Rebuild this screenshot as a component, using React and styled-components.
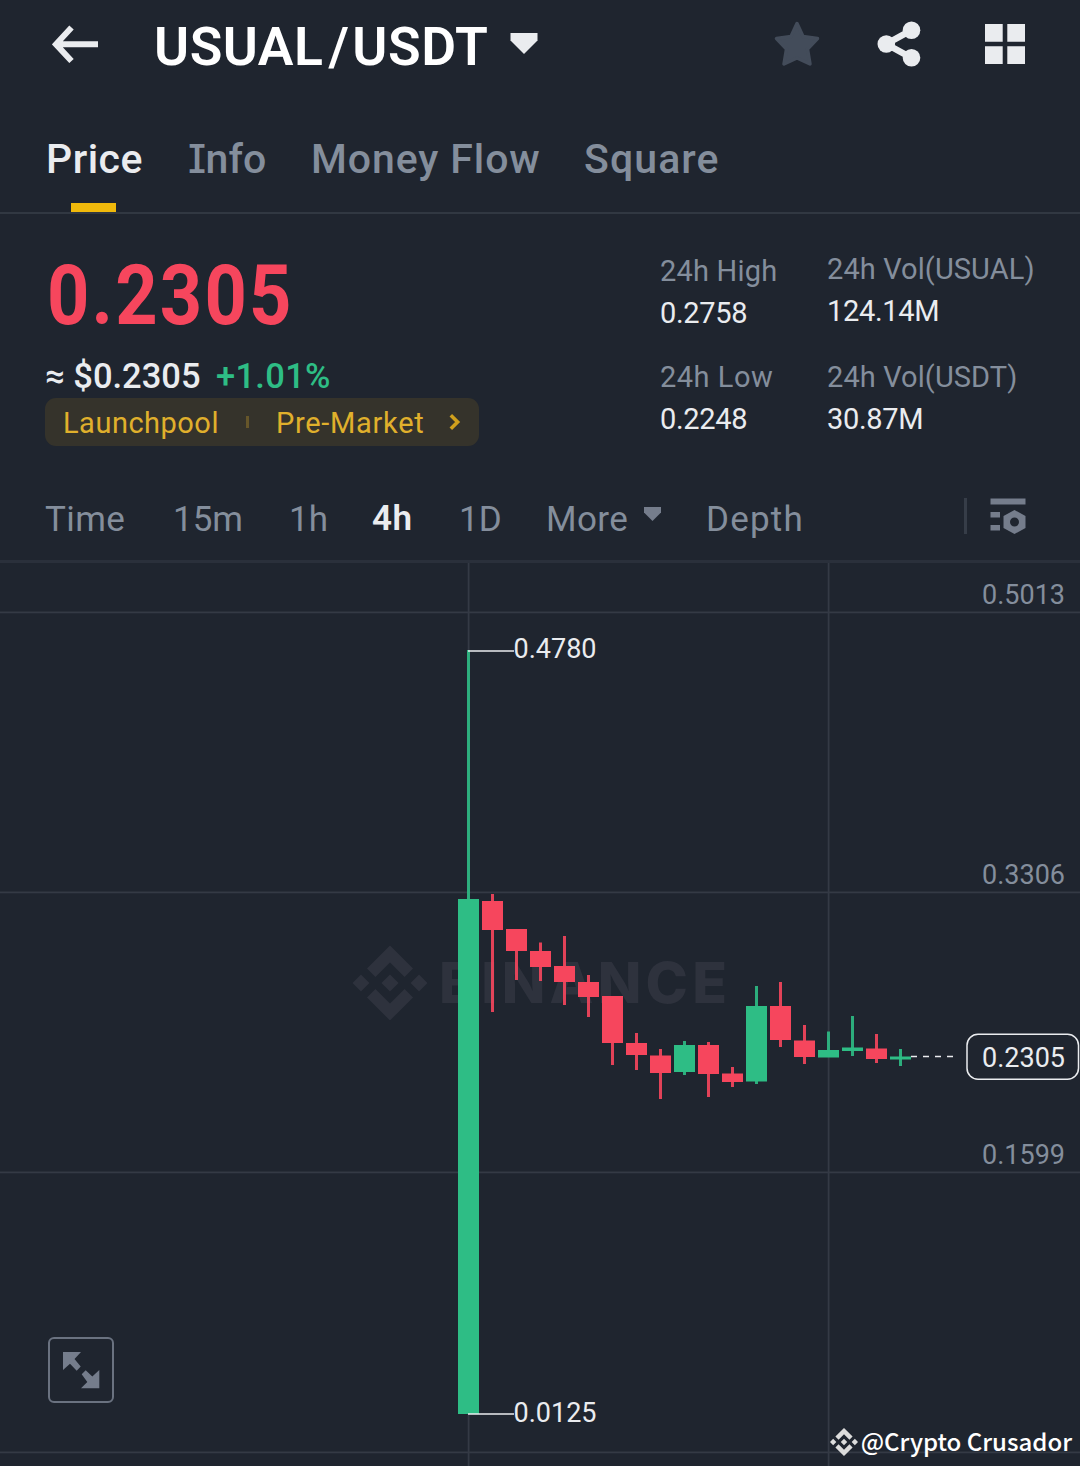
import styled, { createGlobalStyle } from "styled-components";

const UP = "#2ebd85";
const DOWN = "#f6465d";

const CHART_TOP = 563;

// [high, low, body top, body bottom, rising]
const candles = [
  [650, 1414, 899, 1414, true],
  [894, 1012, 901, 930, false],
  [929, 980, 929, 951, false],
  [942.5, 981, 951, 967, false],
  [936, 1005, 966, 982, false],
  [975, 1017, 982, 997, false],
  [996, 1065, 996, 1043, false],
  [1033, 1070, 1043, 1055, false],
  [1049, 1099, 1055.5, 1073, false],
  [1041, 1075, 1045, 1072, true],
  [1042, 1097, 1045, 1074, false],
  [1067, 1087, 1073.5, 1082, false],
  [986, 1084, 1006, 1081.5, true],
  [982, 1047, 1006, 1040, false],
  [1025, 1064, 1040.5, 1057, false],
  [1031.5, 1057, 1050, 1057.5, true],
  [1016, 1056, 1047.5, 1051, true],
  [1034, 1063, 1048.5, 1059, false],
  [1049, 1066, 1056.5, 1059.5, true],
];

const gridLines = [
  { y: 612, label: "0.5013" },
  { y: 892, label: "0.3306" },
  { y: 1172, label: "0.1599" },
  { y: 1452 },
];

const BinanceMark = (props) => (
  <svg viewBox="0 0 126.61 126.61" {...props}>
    <path d="M38.73 53.2L63.31 28.63l24.59 24.59 14.3-14.3L63.31 0 24.43 38.9zM0 63.31L14.3 49l14.3 14.31-14.3 14.3zM38.73 73.41L63.31 98l24.59-24.6 14.3 14.29-38.89 38.92L24.41 87.7zM98 63.31L112.3 49l14.31 14.3-14.3 14.32zM77.83 63.3L63.31 48.78 48.79 63.3l14.52 14.54z" />
  </svg>
);

const Chart = () => (
  <ChartSvg viewBox={`0 ${CHART_TOP} 1080 903`}>
    {gridLines.map(({ y }) => (
      <rect key={y} x="0" y={y - 0.5} width="1080" height="1.8" fill="#343a45" />
    ))}
    <rect x="467.7" y="563" width="1.8" height="903" fill="#343a45" />
    <rect x="827.7" y="563" width="1.8" height="903" fill="#343a45" />
    <BinanceMark x="352.5" y="945.5" width="75" height="75" fill="#2e323d" />
    <WatermarkText x="439" y="1003.3" textLength="288">
      BINANCE
    </WatermarkText>
    {candles.map(([high, low, top, bottom, rising], i) => (
      <g key={i} fill={rising ? UP : DOWN}>
        <rect x={467 + i * 24} y={high} width="3" height={low - high} opacity="0.9" />
        <rect x={458 + i * 24} y={top} width="21" height={bottom - top} />
      </g>
    ))}
    <path d="M468 651H514M468 1414H514" stroke="#eaecef" strokeWidth="1.5" />
    <path d="M911 1056.5H955" stroke="#eaecef" strokeWidth="1.3" strokeDasharray="6 6" />
    <AxisText x="513.5" y="658" $bright>0.4780</AxisText>
    <AxisText x="513.5" y="1422" $bright>0.0125</AxisText>
    {gridLines.filter((g) => g.label).map(({ y, label }) => (
      <AxisText key={y} x="1065" y={y - 8} textAnchor="end">{label}</AxisText>
    ))}
    <rect x="967" y="1034.2" width="111.5" height="45" rx="11" fill="#1f252f" stroke="#eaecef" strokeWidth="1.5" />
    <AxisText x="1065" y="1067" textAnchor="end" $bright>0.2305</AxisText>
  </ChartSvg>
);

const App = () => {
  return (
    <Screen>
      <GlobalStyle />
      <Header>
        <BackIcon viewBox="0 0 46 38">
          <path d="M46 19.3H4M19.5 2.5L4 19.3L19.5 36" fill="none" stroke="#eaecef" strokeWidth="6" />
        </BackIcon>
        <Pair>
          USUAL<Slash>/</Slash>USDT
        </Pair>
        <PairArrow viewBox="0 0 28 21">
          <path d="M0.5 0h27v7.5L14 21L0.5 7.5z" fill="#eaecef" />
        </PairArrow>
        <Actions>
          <svg width="46" height="46" viewBox="0 0 46 46">
            <path
              d="M23 2.5L29 15.5L43.5 17.5L33.5 28L36 43L23 37L10 43L12.5 28L2.5 17.5L17 15.5Z"
              fill="#434c5a"
              stroke="#434c5a"
              strokeWidth="3.5"
              strokeLinejoin="round"
            />
          </svg>
          <svg width="44" height="46" viewBox="0 0 44 46" fill="#eaecef">
            <path d="M34.5 9.2L9.3 23L34.5 36.8" fill="none" stroke="#eaecef" strokeWidth="6.5" />
            <circle cx="34.5" cy="9.2" r="8.8" />
            <circle cx="9.3" cy="23" r="8.8" />
            <circle cx="34.5" cy="36.8" r="8.8" />
          </svg>
          <svg width="40" height="40" viewBox="0 0 40 40" fill="#eaecef">
            <path d="M0 0h17.7v17.7H0zM22.3 0H40v17.7H22.3zM0 22.3h17.7V40H0zM22.3 22.3H40V40H22.3z" />
          </svg>
        </Actions>
      </Header>

      <Tabs>
        <Tab $active $ls="0.5px">Price</Tab>
        <Tab $ls="0"><SerifCap>I</SerifCap>nfo</Tab>
        <Tab $ls="0.9px">Money Flow</Tab>
        <Tab $ls="1.1px">Square</Tab>
      </Tabs>

      <Summary>
        <PriceColumn>
          <LastPrice>0.2305</LastPrice>
          <FiatRow>
            <Fiat>≈ $0.2305</Fiat>
            <Change>+1.01%</Change>
          </FiatRow>
          <Tags>
            <Tag $width="155px">Launchpool</Tag>
            <TagDivider />
            <Tag $width="148px" $ls="0.7px">Pre-Market</Tag>
            <TagArrow viewBox="0 0 12 16">
              <path d="M1.8 1.3L8.6 8L1.8 14.7" fill="none" stroke="#d0a01c" strokeWidth="3.6" />
            </TagArrow>
          </Tags>
        </PriceColumn>
        <StatColumn $width="167px" $top="37px" $gap="22px">
          <Stat>
            <StatLabel>24h High</StatLabel>
            <StatValue>0.2758</StatValue>
          </Stat>
          <Stat>
            <StatLabel $ls="0.5px">24h Low</StatLabel>
            <StatValue>0.2248</StatValue>
          </Stat>
        </StatColumn>
        <StatColumn $width="253px" $top="35px" $gap="24px">
          <Stat>
            <StatLabel $ls="0.1px">24h Vol(USUAL)</StatLabel>
            <StatValue>124.14M</StatValue>
          </Stat>
          <Stat>
            <StatLabel $ls="0.1px">24h Vol(USDT)</StatLabel>
            <StatValue>30.87M</StatValue>
          </Stat>
        </StatColumn>
      </Summary>

      <Intervals>
        <Interval $width="128px">Time</Interval>
        <Interval $width="116px" $ls="0">15m</Interval>
        <Interval $width="83px" $ls="0">1h</Interval>
        <Interval $width="87px" $active>4h</Interval>
        <Interval $width="87px" $ls="0">1D</Interval>
        <Interval $width="160px">
          More
          <MoreArrow viewBox="0 0 17 14">
            <path d="M0 0h17v5.5L8.5 14L0 5.5z" fill="#757d8c" />
          </MoreArrow>
        </Interval>
        <Interval $ls="1.2px">Depth</Interval>
        <ChartTools>
          <ToolDivider />
          <svg width="36" height="36" viewBox="0 0 36 36" fill="#757d8c">
            <path d="M0.5 0.5h35v6H0.5zM0.5 14h9.5v5.5H0.5zM0.5 27h9.5v5.5H0.5z" />
            <path
              fillRule="evenodd"
              d="M24.5 12L35.5 18V30L24.5 36L13.5 30V18ZM24.5 19.5a4.5 4.5 0 1 0 0 9a4.5 4.5 0 1 0 0-9Z"
            />
          </svg>
        </ChartTools>
      </Intervals>

      <ChartArea>
        <Chart />
        <ExpandButton>
          <svg width="38" height="38" viewBox="0 0 38 38" fill="#757d8c">
            <path d="M1 1H19L12.5 8L18.7 15.5L14.7 19.7L8 12.7L1 19ZM37.3 37.3H19L25.3 31L19.7 23.2L23.7 19.3L30.3 25.5L37.3 19Z" />
          </svg>
        </ExpandButton>
        <Credit>
          <BinanceMark width="28" height="28" fill="#dcdcdc" />
          <CreditName>@Crypto Crusador</CreditName>
        </Credit>
      </ChartArea>
    </Screen>
  );
};

export default App;

const GlobalStyle = createGlobalStyle`
  body {
    margin: 0;
    background: #1f252f;
  }
`;

const Screen = styled.div`
  width: 1080px;
  height: 1466px;
  overflow: hidden;
  display: flex;
  flex-direction: column;
  background: #1f252f;
  color: #eaecef;
  font-family: Roboto, "Liberation Sans", sans-serif;
  white-space: nowrap;

  svg {
    display: block;
    flex-shrink: 0;
  }
`;

const Header = styled.header`
  display: flex;
  align-items: center;
  height: 88px;
  padding: 0 55px 0 52px;
  box-sizing: border-box;
`;

const BackIcon = styled.svg`
  width: 46px;
  height: 38px;
`;

const Pair = styled.h1`
  margin: 5px 0 0 56px;
  width: 356px;
  font-size: 53.5px;
  font-weight: 600;
  line-height: 88px;
  letter-spacing: 0.5px;
  color: #ffffff;
`;

const Slash = styled.span`
  margin: 0 3px 0 5px;
`;

const PairArrow = styled.svg`
  width: 28px;
  height: 21px;
  margin-top: -1px;
`;

const Actions = styled.div`
  display: flex;
  align-items: center;
  margin-left: auto;

  svg + svg {
    margin-left: 57px;
  }

  svg + svg + svg {
    margin-left: 64px;
  }
`;

const Tabs = styled.nav`
  display: grid;
  grid-template-columns: 142px 123px 273px auto;
  justify-content: start;
  height: 95px;
  padding: 29px 46px 0;
  border-bottom: 2px solid #313842;
`;

const Tab = styled.div`
  font-size: 41px;
  font-weight: 500;
  line-height: 85px;
  letter-spacing: ${({ $ls }) => $ls};
  color: ${({ $active }) => ($active ? "#eaecef" : "#848e9c")};

  &::after {
    content: "";
    display: ${({ $active }) => ($active ? "block" : "none")};
    width: 45px;
    height: 9px;
    margin: 1px 0 0 25px;
    background: #f0b90b;
  }
`;

const SerifCap = styled.span`
  font-family: Inter, Roboto, sans-serif;
  font-size: 40px;
  line-height: 1;
  letter-spacing: -0.5px;
  font-feature-settings: "cv08";
`;

const Summary = styled.section`
  display: flex;
  height: 263px;
`;

const PriceColumn = styled.div`
  width: 615px;
  padding: 41px 0 0 45px;
`;

const LastPrice = styled.div`
  margin-left: 2px;
  font-size: 84px;
  font-weight: 700;
  line-height: 82px;
  letter-spacing: 2.5px;
  transform: scaleX(0.88);
  transform-origin: left center;
  color: ${DOWN};
`;

const FiatRow = styled.div`
  display: flex;
  margin-top: 17px;
  font-size: 34.5px;
  font-weight: 500;
  line-height: 45px;
`;

const Fiat = styled.span`
  width: 171px;
`;

const Change = styled.span`
  letter-spacing: 0.3px;
  color: ${UP};
`;

const Tags = styled.div`
  display: flex;
  align-items: center;
  width: 434px;
  height: 48px;
  margin-top: -1px;
  padding: 0 18px;
  box-sizing: border-box;
  border-radius: 11px;
  background: #35332b;
`;

const Tag = styled.span`
  width: ${({ $width }) => $width};
  padding-top: 1px;
  font-size: 29px;
  line-height: 48px;
  letter-spacing: ${({ $ls }) => $ls || "0.5px"};
  color: #e0b02c;
`;

const TagDivider = styled.span`
  width: 3px;
  height: 12px;
  margin: 0 27px 0 28px;
  background: #66562a;
`;

const TagArrow = styled.svg`
  width: 12px;
  height: 16px;
  margin-left: auto;
`;

const StatColumn = styled.div`
  display: flex;
  flex-direction: column;
  gap: ${({ $gap }) => $gap};
  width: ${({ $width }) => $width};
  padding-top: ${({ $top }) => $top};
`;

const Stat = styled.div`
  font-size: 29px;

  & + & {
    padding-bottom: 1px;
  }
`;

const StatLabel = styled.div`
  line-height: 40px;
  letter-spacing: ${({ $ls }) => $ls || "0.2px"};
  color: #848e9c;
`;

const StatValue = styled.div`
  margin-top: 1px;
  line-height: 43px;
  letter-spacing: -0.3px;
`;

const Intervals = styled.div`
  display: flex;
  align-items: center;
  height: 83px;
  padding: 0 54px 0 45px;
  border-bottom: 3px solid #2a303b;
`;

const Interval = styled.div`
  display: flex;
  align-items: center;
  width: ${({ $width }) => $width || "auto"};
  padding-top: ${({ $active }) => ($active ? "0" : "2px")};
  font-size: 35px;
  font-weight: ${({ $active }) => ($active ? 600 : 400)};
  line-height: 81px;
  letter-spacing: ${({ $ls }) => $ls || "0.4px"};
  color: ${({ $active }) => ($active ? "#eaecef" : "#848e9c")};
`;

const MoreArrow = styled.svg`
  width: 17px;
  height: 14px;
  margin: -12px 0 0 16px;
`;

const ChartTools = styled.div`
  display: flex;
  align-items: center;
  margin: -5px 0 0 auto;
`;

const ToolDivider = styled.span`
  width: 3px;
  height: 36px;
  margin-right: 23px;
  background: #363d48;
`;

const ChartArea = styled.main`
  position: relative;
  height: 903px;
`;

const ChartSvg = styled.svg`
  width: 1080px;
  height: 903px;
`;

const AxisText = styled.text`
  font-family: Roboto, sans-serif;
  font-size: 27px;
  fill: ${({ $bright }) => ($bright ? "#eaecef" : "#848e9c")};
`;

const WatermarkText = styled.text`
  font-family: Inter, sans-serif;
  font-size: 57px;
  font-weight: 800;
  fill: #2e323d;
`;

const ExpandButton = styled.button`
  position: absolute;
  left: 48px;
  bottom: 63px;
  display: flex;
  align-items: center;
  justify-content: center;
  width: 66px;
  height: 66px;
  padding: 0;
  border: 2px solid #6a7280;
  border-radius: 6px;
  background: none;
`;

const Credit = styled.div`
  position: absolute;
  right: 8px;
  bottom: 7px;
  display: flex;
  align-items: center;
  gap: 3px;
`;

const CreditName = styled.span`
  padding-bottom: 2px;
  font-family: "Noto Sans CJK SC", "Noto Sans", sans-serif;
  font-size: 24px;
  font-weight: 500;
  line-height: 32px;
  color: #ffffff;
`;
